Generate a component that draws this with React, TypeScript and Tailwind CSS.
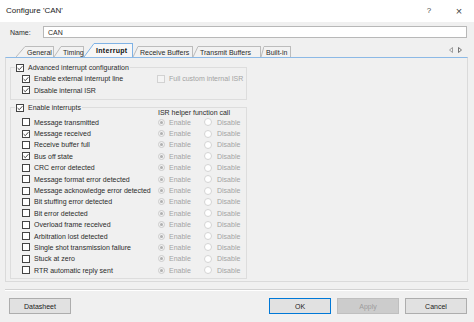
import React from "react";

const rows: [string, boolean][] = [
  ["Message transmitted", false],
  ["Message received", true],
  ["Receive buffer full", false],
  ["Bus off state", true],
  ["CRC error detected", false],
  ["Message format error detected", false],
  ["Message acknowledge error detected", false],
  ["Bit stuffing error detected", false],
  ["Bit error detected", false],
  ["Overload frame received", false],
  ["Arbitration lost detected", false],
  ["Single shot transmission failure", false],
  ["Stuck at zero", false],
  ["RTR automatic reply sent", false],
];

const tabs = [
  { label: "General", slant: 9, w: 29 },
  { label: "Timing", slant: 7, w: 23 },
  { label: "Interrupt", slant: 10, w: 39, active: true },
  { label: "Receive Buffers", slant: 5, w: 55 },
  { label: "Transmit Buffers", slant: 5, w: 63 },
  { label: "Built-in", slant: 3, w: 27 },
];

function Check({ on, disabled }: { on?: boolean; disabled?: boolean }) {
  return (
    <span
      className={
        "flex h-[8px] w-[8px] shrink-0 items-center justify-center border " +
        (disabled ? "border-[#d2d2d2] bg-[#f4f4f4]" : "border-[#444] bg-white")
      }
    >
      {on && (
        <svg width="6" height="6" viewBox="0 0 6 6">
          <path d="M0.6 3.1 L2.3 4.7 L5.4 1.2" fill="none" stroke="#333" strokeWidth="0.9" />
        </svg>
      )}
    </span>
  );
}

function Radio({ on }: { on?: boolean }) {
  return on ? (
    <span className="flex h-[7px] w-[7px] shrink-0 items-center justify-center rounded-full border border-[#cccccc] bg-[#f2f2f2]">
      <span className="h-[3px] w-[3px] rounded-full bg-[#b0b0b0]" />
    </span>
  ) : (
    <span className="h-[8px] w-[8px] shrink-0 rounded-full border border-[#d4d4d4] bg-white" />
  );
}

function Tab({ label, slant, w, active }: { label: string; slant: number; w: number; active?: boolean }) {
  const h = active ? 14 : 11;
  const stroke = active ? "#7fb2e5" : "#bcbcbc";
  return (
    <div className="flex items-end">
      <svg width={slant} height={h} className="block">
        <polygon points={`0,${h} ${slant},0 ${slant},${h}`} fill={active ? "#f7f7f7" : "#f2f2f2"} />
        <line x1="0" y1={h} x2={slant} y2="0.5" stroke={stroke} strokeWidth="1" />
      </svg>
      <div
        style={{ width: w }}
        className={
          "flex items-center border-t border-r pl-[2px] " +
          (active
            ? "h-[14px] border-[#7fb2e5] bg-[#f7f7f7] font-bold tracking-[0.3px] text-[#111]"
            : "h-[11px] border-[#bcbcbc] bg-[#f2f2f2]")
        }
      >
        {label}
      </div>
    </div>
  );
}

function Button({ children, kind }: { children: React.ReactNode; kind?: "default" | "disabled" }) {
  const cls =
    kind === "default"
      ? "border-[#0078d7] bg-[#e1e1e1] text-[#222]"
      : kind === "disabled"
      ? "border-[#bfbfbf] bg-[#cccccc] text-[#9c9c9c]"
      : "border-[#adadad] bg-[#e1e1e1] text-[#222]";
  return (
    <div className={"flex h-[16px] w-[62px] items-center justify-center border " + cls}>{children}</div>
  );
}

export default function App() {
  return (
    <div className="flex h-[322px] w-[474px] flex-col overflow-hidden bg-[#f0f0f0] font-['Liberation_Sans',Arial,sans-serif] text-[7px] leading-none text-[#2b2b2b]">
      {/* title bar */}
      <div className="flex h-[22px] shrink-0 items-center bg-white text-[8px] text-[#222]">
        <span className="pl-[6px]">Configure 'CAN'</span>
        <span className="ml-auto flex w-[30px] justify-center text-[8px] text-[#444]">?</span>
        <span className="flex w-[30px] justify-center text-[11px] font-light text-[#444]">×</span>
      </div>

      {/* name row */}
      <div className="flex h-[20px] shrink-0 items-center">
        <span className="w-[43px] pl-[10px]">Name:</span>
        <div className="flex h-[12px] w-[424px] items-center border border-[#b8b8b8] bg-white pl-[4px]">CAN</div>
      </div>

      {/* tabs */}
      <div className="flex h-[15px] shrink-0 items-end pl-[16px]">
        {tabs.map((t) => (
          <Tab key={t.label} {...t} />
        ))}
        <div className="ml-auto mb-[4px] mr-[12px] flex items-center gap-[5px]">
          <svg width="4" height="6" viewBox="0 0 4 6">
            <polygon points="3.5,0.5 0.5,3 3.5,5.5" fill="none" stroke="#8a8a8a" strokeWidth="0.8" />
          </svg>
          <svg width="4" height="6" viewBox="0 0 4 6">
            <polygon points="0.5,0.5 3.5,3 0.5,5.5" fill="none" stroke="#555" strokeWidth="0.8" />
          </svg>
        </div>
      </div>

      {/* tab panel */}
      <div className="ml-[5px] h-[225px] w-[463px] shrink-0 border border-[#dadada] border-t-[#8cb9e6] pt-[5px] pl-[4px]">
        <fieldset className="h-[37px] w-[237px] border border-[#dddddd]">
          <legend className="ml-[4px] flex h-[9px] items-center gap-[4px] px-[1px]">
            <Check on />
            <span>Advanced interrupt configuration</span>
          </legend>
          <div className="pl-[11px] pt-[1px]">
            <div className="grid h-[11.4px] grid-cols-[135px_1fr] items-center">
              <div className="flex items-center gap-[4px]">
                <Check on />
                <span>Enable external interrupt line</span>
              </div>
              <div className="flex items-center gap-[4px]">
                <Check disabled />
                <span className="text-[#a3a3a3]">Full custom internal ISR</span>
              </div>
            </div>
            <div className="flex h-[11.4px] items-center gap-[4px]">
              <Check on />
              <span>Disable internal ISR</span>
            </div>
          </div>
        </fieldset>

        <fieldset className="mt-[3px] h-[176px] w-[237px] border border-[#dddddd]">
          <legend className="ml-[4px] flex h-[9px] items-center gap-[4px] px-[1px]">
            <Check on />
            <span>Enable interrupts</span>
          </legend>
          <div className="-mt-[4px] pl-[11px]">
            <div className="grid h-[8.5px] grid-cols-[135px_1fr] items-center">
              <span />
              <span className="pl-[1px]">ISR helper function call</span>
            </div>
            {rows.map(([label, on]) => (
              <div key={label} className="grid h-[11.4px] grid-cols-[135px_46px_1fr] items-center">
                <div className="flex items-center gap-[4px]">
                  <Check on={on} />
                  <span>{label}</span>
                </div>
                <div className="flex items-center gap-[4px] pl-[1px] text-[#a3a3a3]">
                  <Radio on />
                  <span>Enable</span>
                </div>
                <div className="flex items-center gap-[5px] pl-[1px] text-[#a3a3a3]">
                  <Radio />
                  <span>Disable</span>
                </div>
              </div>
            ))}
          </div>
        </fieldset>
      </div>

      {/* separator */}
      <div className="mx-[5px] mt-[7px] h-[2px] shrink-0 border-t border-[#d2d2d2] border-b-white border-b" />

      {/* buttons */}
      <div className="mt-[7px] flex shrink-0 items-center pl-[9px] pr-[7px]">
        <Button>Datasheet</Button>
        <div className="ml-auto flex gap-[6px]">
          <Button kind="default">OK</Button>
          <Button kind="disabled">Apply</Button>
          <Button>Cancel</Button>
        </div>
      </div>
    </div>
  );
}
